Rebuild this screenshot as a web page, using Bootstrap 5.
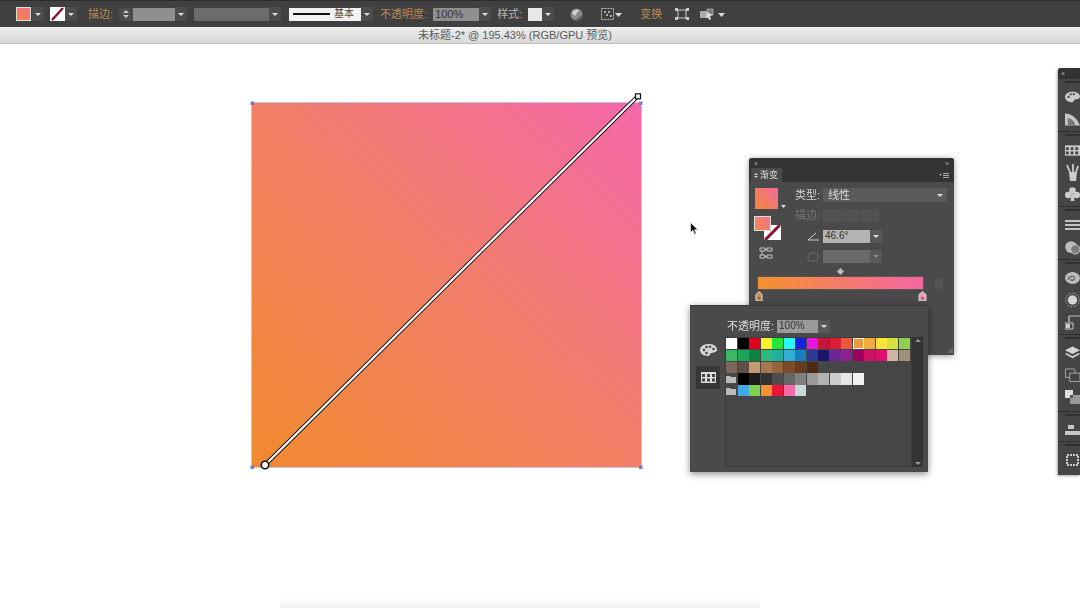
<!doctype html>
<html lang="zh-CN">
<head>
<meta charset="utf-8">
<title>未标题-2</title>
<link href="https://cdn.jsdelivr.net/npm/bootstrap@5.3.0/dist/css/bootstrap.min.css" rel="stylesheet">
<style>
html,body{margin:0;background:#fff;width:1080px;height:608px;overflow:hidden}
body{font-family:"Liberation Sans","Noto Sans CJK SC",sans-serif;font-size:10px;line-height:1}
.stage{position:relative;width:1080px;height:608px;overflow:hidden;filter:blur(.5px)}
.tbar{height:27px;background:#404040;border-top:1px solid #2c2c2c;padding-left:16px}
.tbar>*{flex:none}
.ttl{height:17px;background:linear-gradient(#ececec,#d9d9d9);border-top:1px solid #f4f4f4;border-bottom:1px solid #bdbdbd;padding-left:418px;color:#5a5a5a;font-size:11px}
.lbl{color:#b98a56;font-size:11px}
.lbl-g{color:#b9b9b9}
.sw-fill{width:15px;height:14px;background:linear-gradient(45deg,#f08a40,#f56a8c);border:1px solid #ddd}
.dd{width:12px;height:14px;background:#4c4c4c;display:flex;align-items:center;justify-content:center}
.dd::after{content:"";border:3px solid transparent;border-top:3px solid #ddd;border-bottom:0}
.sw-none{width:15px;height:14px;background:#fff}
.sw-none svg,.ico svg{display:block}
.fld{height:13px;background:#8f8f8f;color:#333;font-size:11px;padding:1px 0 0 2px}
.f42{width:42px}.f75{width:75px;background:#6c6c6c}.f46{width:46px}
.spin{width:14px;height:13px;background:#4c4c4c;display:flex;flex-direction:column;align-items:center;justify-content:center;gap:2px}
.spin i{border:3px solid transparent;border-bottom:3px solid #ccc;border-top:0}
.spin b{border:3px solid transparent;border-top:3px solid #ccc;border-bottom:0}
.strk{width:72px;height:13px;background:#f1f1f1;color:#444;font-size:10px;padding:0 2px 0 4px}
.strk u{display:block;width:37px;height:2px;background:#111;margin-right:4px}
.m1{margin-left:1px}.m3{margin-left:3px}.m6{margin-left:6px}.m7{margin-left:7px}.m8{margin-left:8px}.m11{margin-left:11px}.m13{margin-left:13px}.m16{margin-left:16px}.m18{margin-left:18px}
.boxw{width:14px;height:13px;background:#e8e8e8}
.over{position:absolute;left:0;top:0;pointer-events:none}
.board{position:absolute;left:252px;top:103px;width:389px;height:364px;background:linear-gradient(43deg,#f08a2e 0%,#f17f66 50%,#f568ab 100%);box-shadow:0 0 0 .6px #9aa0d0}
.glow{position:absolute;left:280px;top:598px;width:480px;height:10px;background:linear-gradient(transparent,#f1f1f1)}
.gp{position:absolute;left:749px;top:158px;width:205px;height:197px;background:#4a4a4a;border-radius:3px 3px 0 0;box-shadow:0 1px 6px rgba(0,0,0,.4);color:#cfcfcf}
.gp-head{height:10px;background:#333;border-radius:3px 3px 0 0;padding:0 5px;color:#aaa;font-size:7px}
.gp-tabs{height:14px;background:#353535;padding:0 5px 0 2px}
.gp-tab{width:31px;height:14px;background:#4a4a4a;color:#ddd;font-size:9px;padding-left:3px;gap:2px}
.gp-body{padding:6px 0 0 6px}
.gp-left{width:40px}
.gp-sw{width:23px;height:21px;background:linear-gradient(45deg,#f08a35,#f56aa0)}
.gp-stack{position:relative;width:27px;height:24px;margin:7px 0 0 -1px}
.gp-front{width:17px;height:15px;background:linear-gradient(45deg,#f08a50,#f5708a);border:1px solid #ddd;position:relative;z-index:1}
.gp-back{position:absolute;right:0;bottom:0;width:17px;height:15px;background:#fff}
.gp-back svg{display:block}
.gp-ico{display:block;margin:7px 0 0 4px}
.gp-row{height:13px}
.gp-row.first{height:14px}
.gp-row+.gp-row{margin-top:7px}
.gp-row.third{margin-top:8px}
.gp-l{width:28px;font-size:11px;color:#d2d2d2}
.gp-l.dim{color:#777}
.sel{width:124px;height:14px;background:#5b5b5b;color:#ddd;font-size:11px;padding:0 4px 0 5px}
.sel::after{content:"";border:3px solid transparent;border-top:3px solid #ddd;border-bottom:0}
.btn3{width:18px;height:13px;background:#525252;margin-right:1px}
.fa{width:47px;height:13px;background:#b4b4b4;color:#333;font-size:10px;padding:1px 0 0 2px}
.fb{background:#6a6a6a}
.dds{width:12px;height:13px;background:#585858;display:flex;align-items:center;justify-content:center}
.dds::after{content:"";border:3px solid transparent;border-top:3px solid #ddd;border-bottom:0}
.dim-dd::after{border-top-color:#888}
.diamond{width:5px;height:5px;background:#bbb;transform:rotate(45deg);margin:6px 0 3px 83px}
.gbar-wrap{padding-left:9px}
.gbar{width:165px;height:12px;background:linear-gradient(90deg,#f5902e,#f5689f 95%);box-shadow:0 0 0 1px #555}
.trash{margin-left:11px}
.stops{width:172px;margin:2px 0 0 6px}
.gp-grip{margin-top:46px;padding-right:1px}
.sp{position:absolute;left:690px;top:305px;width:238px;height:167px;background:#4a4a4a;box-shadow:0 2px 7px rgba(0,0,0,.45);border-top:1px solid #3a3a3a}
.sp-rail{width:35px;padding:34px 0 0 6px}
.sp-act{width:24px;height:23px;background:#363636;margin-top:6px}
.sp-pal{width:24px;height:20px}
.sp-main{width:203px;padding-top:14px}
.sp-top{height:13px;margin:0 0 4px 2px;color:#ddd;font-size:11px}
.sp-top .fld{width:41px;margin-left:3px;padding-top:1px;background:#9a9a9a;font-size:10px}
.sp-box{height:130px;width:198px}
.sp-list{width:187px;background:#464646;border:1px solid #3b3b3b;padding:0}
.sw-grid{display:grid;grid-template-columns:repeat(16,11.5px);grid-auto-rows:11.8px;padding-left:0}
.sw-grid span{display:block;margin:0 .5px .5px 0}
.sw-grid .sel-sw{outline:1px solid #eee;outline-offset:-1px;border:1px solid #333}
.sw-folder{display:flex;align-items:center;justify-content:center;margin:0!important}
.sp-scroll{width:11px;background:#333;padding:2px 0}
.sp-scroll i{border:3px solid transparent;border-bottom:3px solid #999;border-top:0}
.sp-scroll b{border:3px solid transparent;border-top:3px solid #999;border-bottom:0}
.rp{position:absolute;left:1058px;top:68px;width:22px;height:407px;background:#454545;border-radius:3px 0 0 0;box-shadow:-1px 1px 3px rgba(0,0,0,.35);color:#bbb}
.rp-x{height:11px;background:#333;border-radius:3px 0 0 0;padding-left:3px;font-size:7px;color:#bbb}
.rp-sec{border-bottom:1px solid #2e2e2e;padding:2px 0 0 7px}
.rp-grip{width:15px;height:2px;background:#2f2f2f;margin:0 0 3px}
.ico{height:22px;display:flex;align-items:center}
.rp-a{height:53px}.rp-b{height:75px}.rp-c{height:53px}.rp-d{height:75px}.rp-e{height:77px}.rp-f{height:30px}.rp-g{height:32px;border-bottom:0}
</style>
</head>
<body>
<div class="stage">
  <div class="tbar d-flex align-items-center">
    <div class="sw-fill"></div><div class="dd m1"></div>
    <div class="sw-none m6"><svg width="15" height="14"><path d="M2 13L13 1" stroke="#8a1030" stroke-width="2.4"/></svg></div><div class="dd"></div>
    <span class="lbl m11">描边:</span>
    <div class="spin m6"><i></i><b></b></div><div class="fld f42"></div><div class="dd"></div>
    <div class="fld f75 m7"></div><div class="dd"></div>
    <div class="strk d-flex align-items-center m8"><u></u><span>基本</span></div><div class="dd"></div>
    <span class="lbl m7">不透明度:</span>
    <div class="fld f46 m6">100%</div><div class="dd"></div>
    <span class="lbl lbl-g m6">样式:</span>
    <div class="boxw m6"></div><div class="dd"></div>
    <svg class="m16" width="13" height="13" viewBox="0 0 13 13"><circle cx="6.500" cy="6.500" r="6" fill="#8a8a8a"/><path d="M2 5a5 4 0 0 1 7-3l-2 3-2 3z" fill="#cfcfcf"/><path d="M6 12a6 6 0 0 0 6-5z" fill="#555"/></svg>
    <svg class="m18" width="13" height="12" viewBox="0 0 13 12"><rect x=".5" y=".5" width="12" height="11" fill="none" stroke="#bbb" stroke-dasharray="2 1"/><path d="M3 3h2v2H3zM7 3h2v2H7zM5 6h2v2H5zM9 7h2v2H9z" fill="#aaa"/></svg>
    <svg class="m1" width="7" height="5"><path d="M0 1h7L3.500 5z" fill="#ddd"/></svg>
    <span class="lbl m18">变换</span>
    <svg class="m13" width="14" height="12" viewBox="0 0 14 12"><path d="M3 2h8v8H3z" fill="none" stroke="#ccc"/><path d="M0 0h3v3H0zM11 0h3v3h-3zM0 9h3v3H0zM11 9h3v3h-3z" fill="#ccc"/></svg>
    <svg class="m11" width="15" height="12" viewBox="0 0 15 12"><path d="M0 3h8v7H0z" fill="#aaa"/><path d="M7 1h6v6H7z" fill="#777" stroke="#ccc" stroke-width=".6"/><path d="M7 4l6 3-3 1 1 3-2 1-1-3-2 1z" fill="#ddd"/></svg>
    <svg class="m3" width="7" height="5"><path d="M0 1h7L3.500 5z" fill="#ddd"/></svg>
  </div>
  <div class="ttl d-flex align-items-center">未标题-2* @ 195.43% (RGB/GPU 预览)</div>

  <div class="board"></div>
  <div class="glow"></div>

  <svg class="over" width="1080" height="608" viewBox="0 0 1080 608">
    <g fill="#6f7fd0">
      <rect x="250.500" y="101.500" width="3.500" height="3.500"/><rect x="639" y="101.500" width="3.500" height="3.500"/>
      <rect x="250.500" y="465.500" width="3.500" height="3.500"/><rect x="639" y="465.500" width="3.500" height="3.500"/>
    </g>
    <path d="M265 465L638 96" stroke="#111" stroke-width="4"/>
    <path d="M265 465L638 96" stroke="#fff" stroke-width="2.200"/>
    <circle cx="265" cy="465" r="3.700" fill="#fff" stroke="#111" stroke-width="1.600"/>
    <rect x="635.500" y="93.800" width="5" height="5" fill="#fff" stroke="#111" stroke-width="1.200"/>
    <path d="M690.500 222.500v10l2.400-2.200 1.700 4 1.600-.7-1.700-3.800h3.300z" fill="#111" stroke="#fff" stroke-width=".6"/>
  </svg>

  <section class="gp">
    <div class="gp-head d-flex justify-content-between align-items-center"><span>×</span><span>»</span></div>
    <div class="gp-tabs d-flex justify-content-between align-items-center">
      <div class="gp-tab d-flex align-items-center"><svg width="4" height="7"><path d="M0 3L2 1l2 2zM0 4l2 2 2-2z" fill="#ccc"/></svg>渐变</div>
      <svg width="10" height="7"><path d="M0 2h3L1.500 4zM4 1h6v1H4zM4 3h6v1H4zM4 5h6v1H4z" fill="#aaa"/></svg>
    </div>
    <div class="gp-body">
      <div class="d-flex">
        <div class="gp-left">
          <div class="d-flex align-items-end"><div class="gp-sw"></div><svg class="m3" width="5" height="4"><path d="M0 0h5L2.500 3z" fill="#ddd"/></svg></div>
          <div class="gp-stack">
            <div class="gp-front"></div>
            <div class="gp-back"><svg width="17" height="15"><path d="M1 15L16 0" stroke="#8a1030" stroke-width="3"/></svg></div>
          </div>
          <svg class="gp-ico" width="14" height="12" viewBox="0 0 14 12"><path d="M1 1h5v3H1zM8 1h5v3H8zM1 8h5v3H1zM8 8h5v3H8z" fill="none" stroke="#c5c5c5"/><path d="M6 2.500h2M6 9.500h2M3 4v4" stroke="#c5c5c5"/></svg>
        </div>
        <div>
          <div class="gp-row first d-flex align-items-center"><span class="gp-l">类型:</span><div class="sel d-flex align-items-center justify-content-between">线性</div></div>
          <div class="gp-row d-flex align-items-center"><span class="gp-l dim">描边:</span><div class="btn3"></div><div class="btn3"></div><div class="btn3"></div></div>
          <div class="gp-row third d-flex align-items-center">
            <span class="gp-l d-flex justify-content-center"><svg class="m8" width="12" height="9"><path d="M1 8h11M1 8L9 1" stroke="#c9c9c9" fill="none"/></svg></span>
            <div class="fa">46.6°</div><div class="dds"></div>
          </div>
          <div class="gp-row d-flex align-items-center">
            <span class="gp-l d-flex justify-content-center"><svg class="m8" width="12" height="10"><rect x="1" y="1" width="10" height="8" rx="3" fill="none" stroke="#6c6c6c"/></svg></span>
            <div class="fa fb"></div><div class="dds dim-dd"></div>
          </div>
        </div>
      </div>
      <div class="diamond"></div>
    </div>
    <div class="gbar-wrap d-flex align-items-center">
      <div class="gbar"></div>
      <svg class="trash" width="10" height="11"><path d="M2 3h6v7H2zM1 2h8M4 1h2M4 4v5M6 4v5" fill="none" stroke="#5f5f5f"/></svg>
    </div>
    <div class="stops d-flex justify-content-between">
      <svg width="8" height="10"><path d="M1 3.500L4 .5l3 3V10H1z" fill="#c89050" stroke="#ddd"/><path d="M2.500 6h3v2.500h-3z" fill="#9c6a30"/></svg>
      <svg width="9" height="10"><path d="M1 3.500L4.500 .5 8 3.500V10H1z" fill="#e8a0bc" stroke="#ccc"/><path d="M3 6h3v2.500H3z" fill="#d04a86"/></svg>
    </div>
    <div class="gp-grip d-flex justify-content-end"><svg width="6" height="6"><path d="M0 6L6 0v6z" fill="#6a6a6a"/></svg></div>
  </section>

  <section class="sp d-flex">
    <div class="sp-rail">
      <div class="sp-pal d-flex align-items-center justify-content-center">
        <svg width="17" height="12" viewBox="0 0 17 12"><path d="M8.500 0C3 0 0 3 0 6s3 6 8 6c2 0 1.500-1.500 2.500-2.500S17 9 17 5.500 13 0 8.500 0z" fill="#d5d5d5"/><g fill="#4a4a4a"><circle cx="4" cy="6" r="1.300"/><circle cx="6.500" cy="3" r="1.300"/><circle cx="10" cy="2.800" r="1.300"/><circle cx="13.500" cy="5" r="1.300"/><circle cx="6.500" cy="9" r="1.300"/></g></svg>
      </div>
      <div class="sp-act d-flex align-items-center justify-content-center">
        <svg width="15" height="11" viewBox="0 0 15 11"><rect width="15" height="11" fill="#ddd"/><path d="M1 2h3v3H1zM6 2h3v3H6zM11 2h3v3h-3zM1 6.500h3v3H1zM6 6.500h3v3H6zM11 6.500h3v3h-3z" fill="#444"/></svg>
      </div>
    </div>
    <div class="sp-main">
      <div class="sp-top d-flex align-items-center">不透明度:<div class="fld">100%</div><div class="dds"></div></div>
      <div class="sp-box d-flex">
        <div class="sp-list">
          <div class="sw-grid">
            <span style="background:#fff"></span><span style="background:#000"></span><span style="background:#e0001b"></span><span style="background:#ffef30"></span><span style="background:#22e63a"></span><span style="background:#2cf5f5"></span><span style="background:#1521dc"></span><span style="background:#e916e0"></span><span style="background:#c2173a"></span><span style="background:#dd1c35"></span><span style="background:#ea5a3a"></span><span class="sel-sw" style="background:#e89a3c"></span><span style="background:#f0ab3e"></span><span style="background:#fbe33a"></span><span style="background:#d2e23a"></span><span style="background:#90d050"></span>
            <span style="background:#3cb860"></span><span style="background:#20a558"></span><span style="background:#0c8140"></span><span style="background:#2dba7c"></span><span style="background:#22b09a"></span><span style="background:#35aed6"></span><span style="background:#1a7dbf"></span><span style="background:#2c3a96"></span><span style="background:#1a1568"></span><span style="background:#6a2795"></span><span style="background:#8e2090"></span><span style="background:#a00060"></span><span style="background:#cc1266"></span><span style="background:#dd1070"></span><span style="background:#d0b8a0"></span><span style="background:#a09078"></span>
            <span style="background:#7a685c"></span><span style="background:#5e5048"></span><span style="background:#c49a70"></span><span style="background:#a87850"></span><span style="background:#96643c"></span><span style="background:#7c4c28"></span><span style="background:#663c1c"></span><span style="background:#4e2a10"></span><span></span><span></span><span></span><span></span><span></span><span></span><span></span><span></span>
            <span class="sw-folder"><svg width="10" height="8"><path d="M0 1h4l1 1h5v6H0z" fill="#bbb"/></svg></span><span style="background:#000"></span><span style="background:#1c1c1c"></span><span style="background:#333"></span><span style="background:#4d4d4d"></span><span style="background:#666"></span><span style="background:#808080"></span><span style="background:#999"></span><span style="background:#b3b3b3"></span><span style="background:#ccc"></span><span style="background:#e6e6e6"></span><span style="background:#f2f2f2"></span><span></span><span></span><span></span><span></span>
            <span class="sw-folder"><svg width="10" height="8"><path d="M0 1h4l1 1h5v6H0z" fill="#bbb"/></svg></span><span style="background:#45a8e6"></span><span style="background:#80d050"></span><span style="background:#f59035"></span><span style="background:#e8163a"></span><span style="background:#f56aa8"></span><span style="background:#c8d8dc"></span>
          </div>
        </div>
        <div class="sp-scroll d-flex flex-column align-items-center justify-content-between"><i></i><b></b></div>
      </div>
    </div>
  </section>

  <aside class="rp">
    <div class="rp-x d-flex align-items-center">×</div>
    <div class="rp-sec rp-a"><div class="rp-grip"></div>
      <div class="ico"><svg width="17" height="12" viewBox="0 0 17 12"><path d="M8.500 0C3 0 0 3 0 6s3 6 8 6c2 0 1.500-1.500 2.500-2.500S17 9 17 5.500 13 0 8.500 0z" fill="#c9c9c9"/><g fill="#454545"><circle cx="4" cy="6" r="1.300"/><circle cx="6.500" cy="3" r="1.300"/><circle cx="10" cy="2.800" r="1.300"/></g></svg></div>
      <div class="ico"><svg width="16" height="13" viewBox="0 0 16 13"><path d="M0 13V0c7 0 13 5 16 13z" fill="#c4c4c4"/><path d="M3 13V5c5 1 7 4 8 8z" fill="#777"/></svg></div>
    </div>
    <div class="rp-sec rp-b"><div class="rp-grip"></div>
      <div class="ico"><svg width="16" height="11" viewBox="0 0 16 11"><rect width="16" height="11" fill="#c9c9c9"/><path d="M1 2h3v3H1zM6 2h3v3H6zM11 2h3v3h-3zM1 6.500h3v3H1zM6 6.500h3v3H6zM11 6.500h3v3h-3z" fill="#454545"/></svg></div>
      <div class="ico"><svg width="15" height="17" viewBox="0 0 15 17"><path d="M4 8h8l-1 9H5z" fill="#ccc"/><path d="M5 8L2 1M8 8V0M11 8l2-6" stroke="#ccc" stroke-width="1.800"/></svg></div>
      <div class="ico"><svg width="15" height="14" viewBox="0 0 15 14"><circle cx="7.500" cy="3.500" r="3.300" fill="#ccc"/><circle cx="3.300" cy="8" r="3.300" fill="#ccc"/><circle cx="11.700" cy="8" r="3.300" fill="#ccc"/><path d="M6.500 7h2l1 7h-4z" fill="#ccc"/></svg></div>
    </div>
    <div class="rp-sec rp-c"><div class="rp-grip"></div>
      <div class="ico"><svg width="16" height="10"><path d="M0 0h16v2H0zM0 4h16v2H0zM0 8h16v2H0z" fill="#c4c4c4"/></svg></div>
      <div class="ico"><svg width="16" height="15" viewBox="0 0 16 15"><circle cx="6.500" cy="7" r="6.300" fill="#bcbcbc"/><circle cx="11" cy="9.500" r="5" fill="#7c7c7c" stroke="#d0d0d0"/></svg></div>
    </div>
    <div class="rp-sec rp-d"><div class="rp-grip"></div>
      <div class="ico"><svg width="16" height="14" viewBox="0 0 16 14"><ellipse cx="8" cy="7" rx="8" ry="6.500" fill="#bcbcbc"/><path d="M3 9c2-5 8-5 7-1-1 2-4 2-4 0" fill="none" stroke="#555" stroke-width="1.200"/></svg></div>
      <div class="ico"><svg width="16" height="16" viewBox="0 0 16 16"><circle cx="8" cy="8" r="5" fill="#d5d5d5"/><circle cx="8" cy="8" r="7.300" fill="none" stroke="#bbb" stroke-dasharray="1.500 1.500"/></svg></div>
      <div class="ico"><svg width="15" height="16" viewBox="0 0 15 16"><path d="M4 8V2h11M4 2v6" fill="none" stroke="#bbb"/><path d="M0 9h8v6H0z" fill="none" stroke="#ccc"/><path d="M1 10h4v4H1z" fill="#ccc"/></svg></div>
    </div>
    <div class="rp-sec rp-e"><div class="rp-grip"></div>
      <div class="ico"><svg width="16" height="15" viewBox="0 0 16 15"><path d="M8 0l8 4-8 4-8-4z" fill="#d5d5d5"/><path d="M1.500 7L8 10.500 14.500 7 16 8l-8 4.500L0 8z" fill="#d5d5d5"/></svg></div>
      <div class="ico"><svg width="16" height="15" viewBox="0 0 16 15"><path d="M.5.5h10v9H.5z" fill="none" stroke="#aaa"/><path d="M5 5h11v9H5z" fill="#454545" stroke="#aaa"/></svg></div>
      <div class="ico"><svg width="15" height="14" viewBox="0 0 15 14"><path d="M0 0h8v8H0z" fill="#ddd"/><path d="M5 5h10v9H5z" fill="#999"/><path d="M5 5h3v3H5z" fill="#555"/></svg></div>
    </div>
    <div class="rp-sec rp-f"><div class="rp-grip"></div>
      <div class="ico"><svg width="16" height="11"><path d="M3 0h6v4H3zM0 6h16v4H0z" fill="#c9c9c9"/></svg></div>
    </div>
    <div class="rp-sec rp-g"><div class="rp-grip"></div>
      <div class="ico"><svg width="15" height="14" viewBox="0 0 15 14"><path d="M2 2h11v10H2z" fill="none" stroke="#ccc" stroke-width="2" stroke-dasharray="2 1"/></svg></div>
    </div>
  </aside>
</div>
<script src="https://cdn.jsdelivr.net/npm/bootstrap@5.3.0/dist/js/bootstrap.bundle.min.js"></script>
</body>
</html>
